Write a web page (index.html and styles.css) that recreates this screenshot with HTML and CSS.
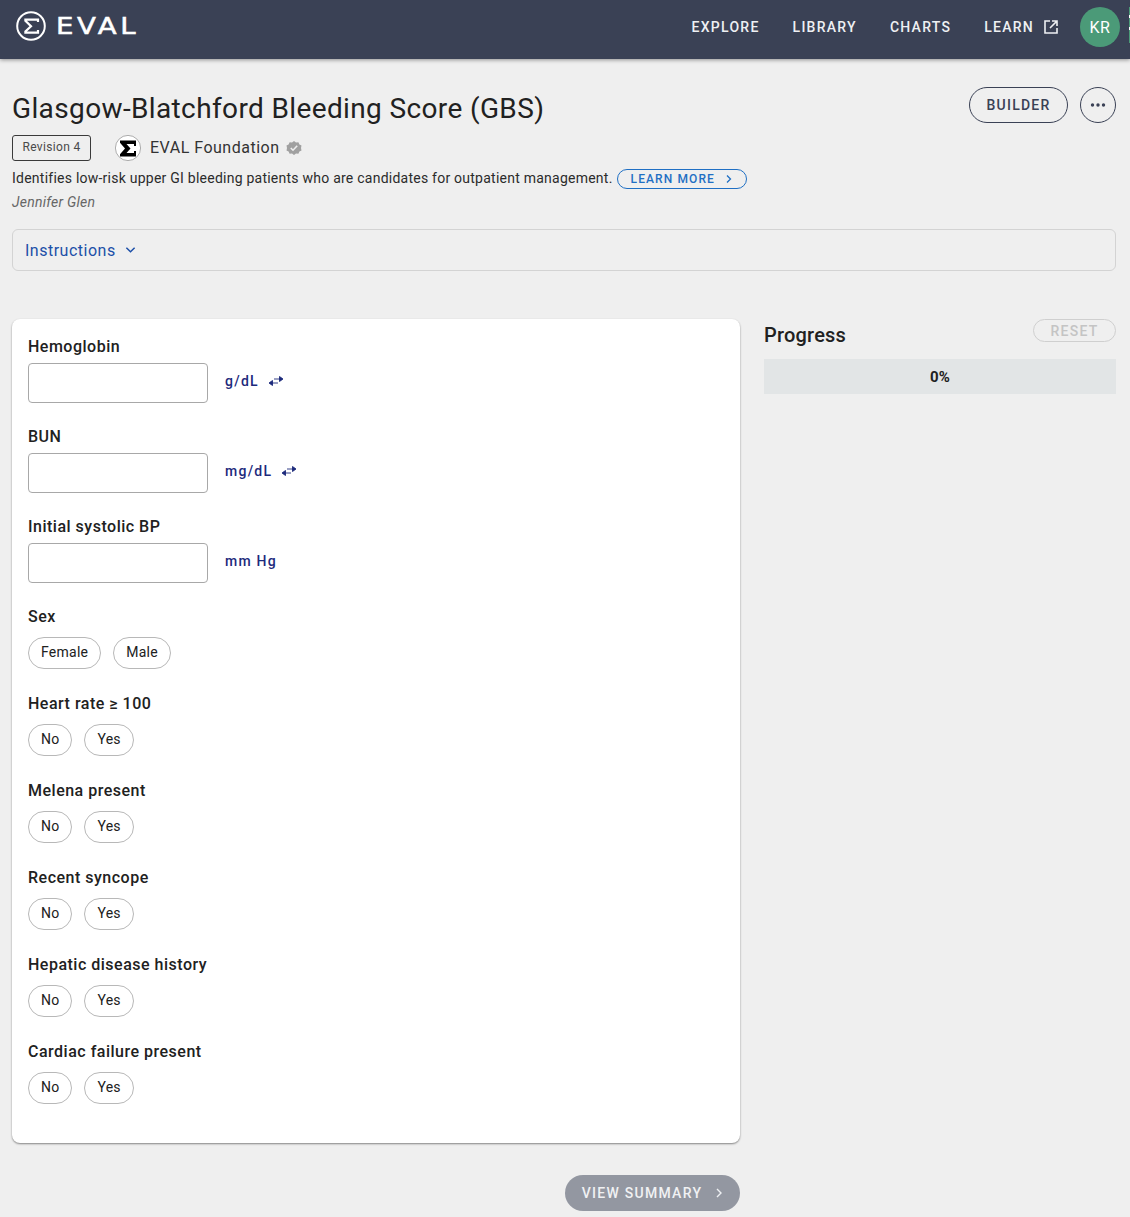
FILE: index.html
```html
<!DOCTYPE html>
<html lang="en">
<head>
<meta charset="utf-8">
<title>Glasgow-Blatchford Bleeding Score (GBS)</title>
<link rel="stylesheet" href="styles.css">
</head>
<body>
<header class="topbar">
  <a class="brand">
    <svg class="brand-mark" viewBox="0 0 30 30" width="30" height="30"><circle cx="15" cy="15" r="13.8" fill="none" stroke="#fff" stroke-width="2"/><path d="M22 11V8.600H9.400v1.200l5.600 5.400-5.600 5.200v1.200H22V19" fill="none" stroke="#fff" stroke-width="2.200"/></svg>
    <span class="brand-word">EVAL</span>
  </a>
  <nav class="nav">
    <a>EXPLORE</a>
    <a>LIBRARY</a>
    <a>CHARTS</a>
    <a class="nav-ext">LEARN
      <svg viewBox="0 0 16 16" width="16" height="16"><path d="M7 2H2v12h12V9M9 2h5v5M14 2 7 9" fill="none" stroke="#eef0f3" stroke-width="1.600"/></svg>
    </a>
  </nav>
  <div class="avatar">KR</div>
  <span class="edge-mark"></span>
</header>
<main class="page">
  <section class="head">
    <div class="head-top">
      <h1>Glasgow-Blatchford Bleeding Score (GBS)</h1>
      <div class="head-actions">
        <button class="btn-outline">BUILDER</button>
        <button class="btn-more"><svg viewBox="0 0 16 4" width="16" height="4"><circle cx="2.500" cy="2" r="1.700"/><circle cx="8" cy="2" r="1.700"/><circle cx="13.500" cy="2" r="1.700"/></svg></button>
      </div>
    </div>
    <div class="meta">
      <span class="revision">Revision 4</span>
      <span class="org-logo"><svg viewBox="0 0 26 26" width="26" height="26"><circle cx="13" cy="13" r="12.600" fill="#fff" stroke="#999" stroke-width=".8"/><path d="M5 5.500H21V11H19V9H11.500L15.500 13.500L11.500 18H19V16H21V21.500H5V19.300L10 13.500L5 7.700Z" fill="#000"/></svg></span>
      <span class="org-name">EVAL Foundation</span>
      <svg class="verified" viewBox="0 0 16 16" width="16" height="16"><path d="M8 0l2 1.400 2.400-.2 1 2.200 2.100 1.200-.5 2.400.5 2.400-2.100 1.200-1 2.200-2.400-.2L8 14l-2-1.400-2.400.2-1-2.200L.5 9.400 1 7 .5 4.600l2.100-1.200 1-2.200L6 1.400z" transform="translate(0 1)" fill="#a0a0a0"/><path d="M4.800 8l2.200 2.200 4.200-4.400" fill="none" stroke="#eee" stroke-width="1.600"/></svg>
    </div>
    <p class="desc"><span>Identifies low-risk upper GI bleeding patients who are candidates for outpatient management.</span>
      <a class="learn-more">LEARN MORE<svg viewBox="0 0 8 10" width="8" height="10"><path d="M2 1.500 5.500 5 2 8.500" fill="none" stroke="#1f6fc4" stroke-width="1.300"/></svg></a>
    </p>
    <p class="author">Jennifer Glen</p>
    <div class="instructions">Instructions<svg viewBox="0 0 12 8" width="11" height="8"><path d="M1.500 1.500 6 6l4.500-4.500" fill="none" stroke="#1c4fa8" stroke-width="1.600"/></svg></div>
  </section>
  <div class="columns">
    <div class="left">
      <form class="card">
        <div class="field">
          <label>Hemoglobin</label>
          <div class="input-row"><span class="input"></span><span class="unit">g/dL</span><svg class="swap" viewBox="0 0 14 10" width="14" height="10"><path d="M5 3h8M10.500.5V5.500L14 3zM1 7h8M3.500 4.500V9.500L0 7z" fill="#1d2a7c" stroke="#1d2a7c" stroke-width=".9"/></svg></div>
        </div>
        <div class="field">
          <label>BUN</label>
          <div class="input-row"><span class="input"></span><span class="unit">mg/dL</span><svg class="swap" viewBox="0 0 14 10" width="14" height="10"><path d="M5 3h8M10.500.5V5.500L14 3zM1 7h8M3.500 4.500V9.500L0 7z" fill="#1d2a7c" stroke="#1d2a7c" stroke-width=".9"/></svg></div>
        </div>
        <div class="field">
          <label>Initial systolic BP</label>
          <div class="input-row"><span class="input"></span><span class="unit">mm Hg</span></div>
        </div>
        <div class="field-choice">
          <label>Sex</label>
          <div class="pills"><button type="button" class="pill">Female</button><button type="button" class="pill">Male</button></div>
        </div>
        <div class="field-choice">
          <label>Heart rate ≥ 100</label>
          <div class="pills"><button type="button" class="pill">No</button><button type="button" class="pill">Yes</button></div>
        </div>
        <div class="field-choice">
          <label>Melena present</label>
          <div class="pills"><button type="button" class="pill">No</button><button type="button" class="pill">Yes</button></div>
        </div>
        <div class="field-choice">
          <label>Recent syncope</label>
          <div class="pills"><button type="button" class="pill">No</button><button type="button" class="pill">Yes</button></div>
        </div>
        <div class="field-choice">
          <label>Hepatic disease history</label>
          <div class="pills"><button type="button" class="pill">No</button><button type="button" class="pill">Yes</button></div>
        </div>
        <div class="field-choice">
          <label>Cardiac failure present</label>
          <div class="pills"><button type="button" class="pill">No</button><button type="button" class="pill">Yes</button></div>
        </div>
      </form>
      <div class="summary-row">
        <button class="btn-summary">VIEW SUMMARY<svg viewBox="0 0 8 10" width="8" height="10"><path d="M2 1 6 5 2 9" fill="none" stroke="#eef0f3" stroke-width="1.400"/></svg></button>
      </div>
    </div>
    <aside class="right">
      <div class="progress-head"><h2>Progress</h2><button class="btn-reset">RESET</button></div>
      <div class="progress-bar">0%</div>
    </aside>
  </div>
</main>
</body>
</html>
```
FILE: styles.css
```css
* { box-sizing: border-box; }
html, body { margin: 0; height: 1217px; overflow: hidden; }
body { background: #efefef; color: #212121; font-family: Roboto, "Liberation Sans", sans-serif; }
button { font-family: inherit; cursor: pointer; }

.topbar { height: 59px; background: #3a4155; box-shadow: 0 1px 4px rgba(0,0,0,.4); display: flex; align-items: center; padding: 0 10px 5px 16px; position: relative; }
.brand { display: flex; align-items: center; gap: 10px; margin-bottom: 2px; }
.brand-mark { display: block; }
.brand-word { display: inline-block; font-family: "DejaVu Sans", sans-serif; font-size: 23px; line-height: 30px; color: #fff; letter-spacing: 3px; -webkit-text-stroke: .5px #fff; transform: scaleX(1.2); transform-origin: left center; }
.nav { margin-left: auto; display: flex; align-items: center; gap: 33px; color: #eef0f3; font-size: 14px; font-weight: 500; letter-spacing: 1.26px; }
.nav-ext { display: flex; align-items: center; gap: 9px; }
.nav-ext svg { display: block; }
.avatar { width: 40px; height: 40px; border-radius: 50%; background: #4b9a78; color: #fff; font-size: 16px; letter-spacing: .5px; display: flex; align-items: center; justify-content: center; margin-left: 21px; }
.edge-mark { position: absolute; right: 0; top: 7px; width: 1px; height: 36px; background: linear-gradient(#4b9a78 0 8px, #fff 8px 11px, #4b9a78 11px 20px, #fff 20px 23px, #4b9a78 23px); }

.page { padding: 28px 14px 0 12px; }
.head-top { display: flex; justify-content: space-between; align-items: flex-start; height: 48px; }
h1 { margin: 2px 0 0; font-size: 28px; line-height: 40px; font-weight: 400; letter-spacing: .37px; color: #212121; }
.head-actions { display: flex; gap: 12px; }
.btn-outline { height: 36px; width: 99px; padding: 0; border: 1px solid #3a4155; border-radius: 18px; background: transparent; color: #3a4155; font-size: 14px; font-weight: 500; letter-spacing: 1.26px; }
.btn-more { width: 36px; height: 36px; padding: 0; border: 1px solid #3a4155; border-radius: 50%; background: transparent; display: flex; align-items: center; justify-content: center; }
.btn-more svg { fill: #3a4155; }

.meta { display: flex; align-items: center; height: 26px; }
.revision { width: 79px; height: 26px; border: 1px solid #3a3a3a; border-radius: 3px; font-size: 12px; letter-spacing: .35px; color: #4a4a4a; display: flex; align-items: center; justify-content: center; padding-bottom: 2px; }
.org-logo { margin-left: 24px; display: block; height: 26px; }
.org-logo svg { display: block; }
.org-name { margin: 0 0 1px 9px; font-size: 16px; letter-spacing: .5px; color: #333; }
.verified { margin-left: 6px; display: block; }

.desc { margin: 7px 0 0; height: 20px; display: flex; align-items: flex-start; gap: 4px; font-size: 14px; line-height: 20px; letter-spacing: .24px; color: #2b2b2b; }
.learn-more { display: flex; align-items: center; flex: none; height: 20px; width: 130px; padding-left: 13px; margin-top: 1px; gap: 10px; border: 1px solid #1f6fc4; border-radius: 10px; color: #1f6fc4; font-size: 12px; font-weight: 500; letter-spacing: 1.1px; }
.author { margin: 4px 0 0; font-size: 14px; line-height: 20px; font-style: italic; color: #666; letter-spacing: .25px; }
.instructions { margin-top: 17px; height: 42px; border: 1px solid #d3d3d3; border-radius: 6px; padding: 0 12px; display: flex; align-items: center; gap: 9px; color: #1c4fa8; font-size: 16px; letter-spacing: .5px; }

.columns { margin-top: 48px; display: flex; align-items: flex-start; gap: 24px; }
.left { width: 728px; flex: none; }
.right { flex: 1; }
.card { height: 824px; background: #fff; border-radius: 8px; box-shadow: 0 1px 2px rgba(0,0,0,.45); padding: 18px 16px 0; }
.field { height: 90px; }
.field-choice { height: 87px; }
label { display: block; font-size: 16px; line-height: 20px; font-weight: 500; letter-spacing: .5px; color: #212121; }
.input-row { display: flex; align-items: center; margin-top: 6px; height: 40px; }
.input { width: 180px; height: 40px; border: 1px solid #a8a8a8; border-radius: 4px; background: #fff; display: block; }
.unit { margin: 0 0 4px 17px; font-size: 14px; letter-spacing: 1.25px; color: #1d2a7c; font-weight: 500; }
.swap { margin: 0 0 4px 10px; display: block; }
.pills { display: flex; gap: 12px; margin-top: 10px; }
.pill { height: 32px; padding: 0 12px 2px; border: 1px solid #b8b8b8; border-radius: 16px; background: #fff; color: #212121; font-size: 14px; letter-spacing: .25px; }

.summary-row { margin-top: 32px; display: flex; justify-content: flex-end; }
.btn-summary { height: 36px; width: 175px; border: 0; border-radius: 18px; background: #9397a1; color: #f0f1f3; font-size: 14px; font-weight: 500; letter-spacing: 1.26px; display: flex; align-items: center; justify-content: center; gap: 13px; padding: 0; }

.progress-head { display: flex; justify-content: space-between; align-items: flex-start; height: 40px; }
h2 { margin: 3px 0 0; font-size: 20px; line-height: 26px; font-weight: 500; letter-spacing: .2px; color: #212121; }
.btn-reset { width: 83px; height: 23px; padding: 0; border: 1px solid #cfcfcf; border-radius: 12px; background: transparent; color: #c4c4c4; font-size: 14px; font-weight: 500; letter-spacing: 1.26px; }
.progress-bar { height: 35px; background: #e2e5e6; display: flex; align-items: center; justify-content: center; font-size: 15px; font-weight: 700; letter-spacing: .25px; color: #212121; }
```
